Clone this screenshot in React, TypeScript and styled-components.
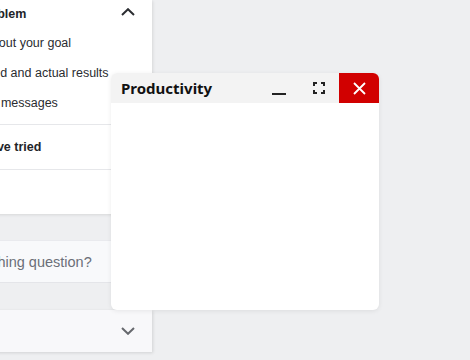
import React from "react";
import styled, { createGlobalStyle } from "styled-components";

const GlobalStyle = createGlobalStyle`
  html, body {
    margin: 0;
    padding: 0;
    background: #eeeff1;
    height: 360px;
    overflow: hidden;
    font-family: "Liberation Sans", Arial, sans-serif;
  }
`;

const Page = styled.div`
  position: relative;
  width: 470px;
  height: 360px;
  overflow: hidden;
`;

const Column = styled.div`
  width: 300px;
  margin-left: -148px;
  display: flex;
  flex-direction: column;
`;

const GuideCard = styled.div`
  background: #ffffff;
  height: 214px;
  box-shadow: 1px 1px 3px rgba(0, 0, 0, 0.1);
  display: flex;
  flex-direction: column;
`;

const HeaderRow = styled.div`
  height: 28px;
  display: flex;
  align-items: center;
  justify-content: space-between;
  padding: 0 17px 0 94px;
`;

const BoldText = styled.span`
  font-size: 12.5px;
  font-weight: 700;
  color: #222428;
  white-space: nowrap;
`;

const ToggleIcon = styled.span<{ $lift?: boolean }>`
  display: flex;
  margin-bottom: ${(p) => (p.$lift ? "4px" : "0")};
`;

const ItemList = styled.ul`
  list-style: none;
  margin: 0;
  padding: 0 0 6px 0;
`;

const Item = styled.li`
  height: 30px;
  display: flex;
  align-items: center;
  padding-left: 94px;
  font-size: 12.5px;
  color: #2a2c30;
  white-space: nowrap;
`;

const Section = styled.div`
  height: 44px;
  border-top: 1px solid #e6e7ea;
  display: flex;
  align-items: center;
  padding-left: 94px;
`;

const AskBox = styled.div`
  margin-top: 26px;
  height: 43px;
  box-sizing: border-box;
  background: #f8f9fb;
  border-top: 1px solid #e9eaee;
  border-bottom: 1px solid #e4e5e9;
  display: flex;
  align-items: center;
  padding-left: 68px;
  font-size: 14.5px;
  color: #6b6f78;
  white-space: nowrap;
`;

const CollapsedCard = styled.div`
  margin-top: 27px;
  height: 42px;
  background: #f8f8fa;
  box-shadow: 1px 1px 3px rgba(0, 0, 0, 0.12);
  display: flex;
  align-items: center;
  justify-content: flex-end;
  padding-right: 17px;
`;

const Chevron = ({ up, color }: { up?: boolean; color: string }) => (
  <svg width="14" height="8" viewBox="0 0 14 8">
    <polyline
      points={up ? "1,7 7,1.2 13,7" : "1,1 7,6.8 13,1"}
      fill="none"
      stroke={color}
      strokeWidth="2"
    />
  </svg>
);

const Popup = styled.div`
  position: absolute;
  left: 111px;
  top: 73px;
  width: 268px;
  height: 237px;
  background: #ffffff;
  border-radius: 6px;
  box-shadow: 0 1px 5px rgba(0, 0, 0, 0.08);
  overflow: hidden;
  display: flex;
  flex-direction: column;
`;

const TitleBar = styled.div`
  height: 30px;
  background: #f3f3f3;
  display: flex;
  align-items: center;
`;

const Title = styled.span`
  flex: 1;
  padding-left: 10px;
  font-family: "Noto Sans", "Open Sans", sans-serif;
  font-size: 15px;
  font-weight: 700;
  color: #111111;
`;

const WinButton = styled.button<{ $danger?: boolean }>`
  width: 40px;
  height: 30px;
  border: none;
  padding: 0;
  margin: 0;
  display: flex;
  align-items: center;
  justify-content: center;
  background: ${(p) => (p.$danger ? "#d10000" : "transparent")};
`;

export default function App() {
  return (
    <>
      <GlobalStyle />
      <Page>
        <Column>
          <GuideCard>
            <HeaderRow>
              <BoldText>Your problem</BoldText>
              <ToggleIcon $lift>
                <Chevron up color="#2b2d31" />
              </ToggleIcon>
            </HeaderRow>
            <ItemList>
              <Item>Tell us about your goal</Item>
              <Item>Envisioned and actual results</Item>
              <Item>Any error messages</Item>
            </ItemList>
            <Section>
              <BoldText>Things I've tried</BoldText>
            </Section>
            <Section />
          </GuideCard>
          <AskBox>Have a teaching question?</AskBox>
          <CollapsedCard>
            <ToggleIcon>
              <Chevron color="#66686d" />
            </ToggleIcon>
          </CollapsedCard>
        </Column>

        <Popup>
          <TitleBar>
            <Title>Productivity</Title>
            <WinButton aria-label="Minimize">
              <svg width="14" height="14" viewBox="0 0 14 14">
                <rect x="0" y="12" width="14" height="2" fill="#222" />
              </svg>
            </WinButton>
            <WinButton aria-label="Maximize">
              <svg width="12" height="12" viewBox="0 0 12 12">
                <path
                  d="M1 4V1h3M8 1h3v3M11 8v3H8M4 11H1V8"
                  fill="none"
                  stroke="#222"
                  strokeWidth="2"
                />
              </svg>
            </WinButton>
            <WinButton $danger aria-label="Close">
              <svg width="13" height="13" viewBox="0 0 13 13">
                <path d="M1 1l11 11M12 1L1 12" stroke="#fff" strokeWidth="1.8" />
              </svg>
            </WinButton>
          </TitleBar>
        </Popup>
      </Page>
    </>
  );
}
